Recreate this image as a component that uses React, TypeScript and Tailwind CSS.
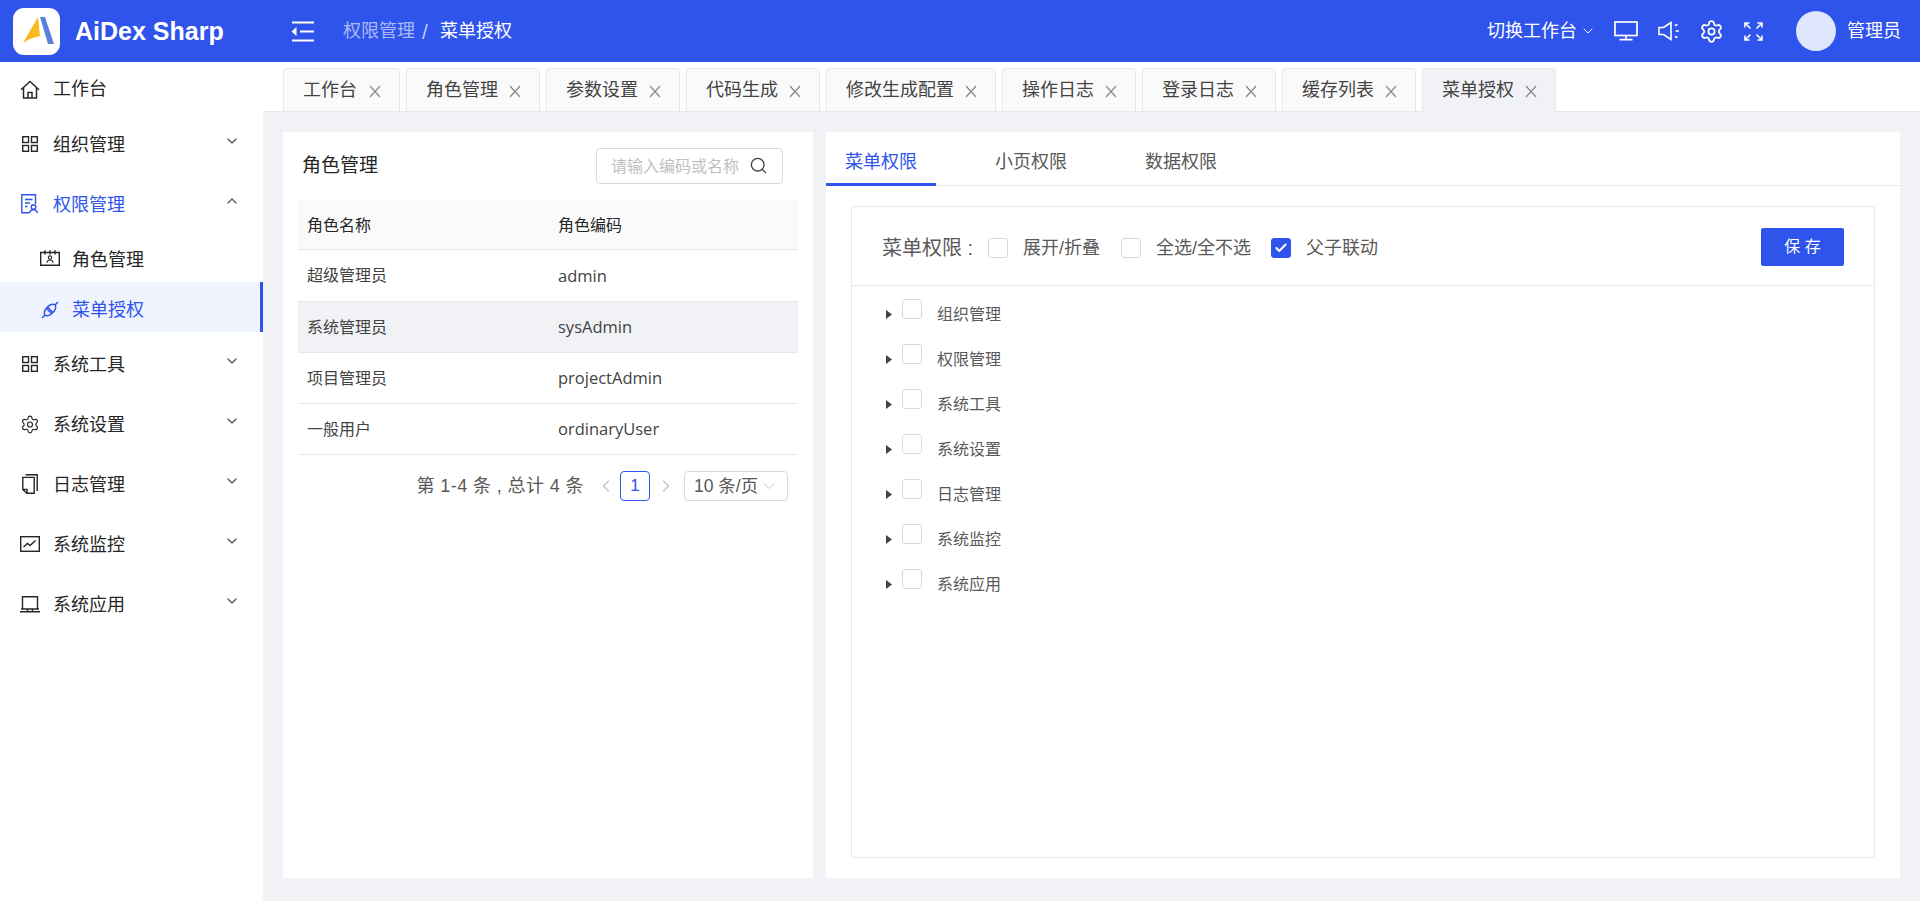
import { Settings, Search, ChevronDown, ChevronUp, ChevronLeft, ChevronRight, Check } from "lucide-react";

const tabs = [
  { label: "工作台", width: "w-[117px]" },
  { label: "角色管理", width: "w-[134px]" },
  { label: "参数设置", width: "w-[134px]" },
  { label: "代码生成", width: "w-[134px]" },
  { label: "修改生成配置", width: "w-[170px]" },
  { label: "操作日志", width: "w-[134px]" },
  { label: "登录日志", width: "w-[134px]" },
  { label: "缓存列表", width: "w-[134px]" },
  { label: "菜单授权", width: "w-[134px]", active: true },
];

const roles = [
  { name: "超级管理员", code: "admin" },
  { name: "系统管理员", code: "sysAdmin", selected: true },
  { name: "项目管理员", code: "projectAdmin" },
  { name: "一般用户", code: "ordinaryUser" },
];

const treeNodes = ["组织管理", "权限管理", "系统工具", "系统设置", "日志管理", "系统监控", "系统应用"];

const Logo = () => (
  <div className="w-[47px] h-[47px] rounded-[11px] bg-white flex items-center justify-center">
    <svg width="47" height="47" viewBox="0 0 47 47">
      <path d="M25 9 L27 28 L17 31 L10 35 Z" fill="#fbb921" />
      <path d="M27 9 L32 9 L41 36 L35 36 Z" fill="#5b7fdc" />
    </svg>
  </div>
);

const CollapseIcon = () => (
  <svg width="24" height="21" viewBox="0 0 24 21" fill="none" stroke="currentColor" strokeWidth="2">
    <path d="M1 1.5h22M9 10.5h14M1 19.5h22" />
    <path d="M0.5 10.5 L5.5 6 V15 Z" fill="currentColor" stroke="none" />
  </svg>
);

const HomeIcon = () => (
  <svg width="20" height="20" viewBox="0 0 20 20" fill="none" stroke="#262626" strokeWidth="1.5">
    <path d="M1 9.8 L10 1.5 L19 9.8" />
    <path d="M3.5 8 V18 H16.5 V8" />
    <path d="M8 18 V12.5 H12 V18" />
  </svg>
);

const GridIcon = () => (
  <svg width="16" height="16" viewBox="0 0 16 16" fill="none" stroke="#262626" strokeWidth="1.4">
    <rect x="0.7" y="0.7" width="5.8" height="5.8" />
    <rect x="9.5" y="0.7" width="5.8" height="5.8" />
    <rect x="0.7" y="9.5" width="5.8" height="5.8" />
    <rect x="9.5" y="9.5" width="5.8" height="5.8" />
  </svg>
);

const AuthIcon = () => (
  <svg width="18" height="20" viewBox="0 0 18 20" fill="none" stroke="#2f54eb" strokeWidth="1.4">
    <path d="M8 18.8 H0.8 V0.8 H14.5 V10" />
    <path d="M4 5.5 H11.5 M4 9 H9 M4 12.5 H6.5" />
    <circle cx="12.5" cy="13" r="2.3" />
    <path d="M8.5 19.2 C9 16.6 10.5 15.8 12.5 15.8 C14.5 15.8 16 16.6 16.5 19.2" />
  </svg>
);

const RoleIcon = () => (
  <svg width="20" height="16" viewBox="0 0 20 16" fill="none" stroke="#262626" strokeWidth="1.4">
    <path d="M0.7 2.5 H19.3 V15.3 H0.7 Z" />
    <path d="M5 0.3 V4.5 M10 0.3 V4.5 M15 0.3 V4.5" />
    <circle cx="10" cy="7.6" r="1.7" strokeWidth="1.1" />
    <path d="M6.8 12.6 C7.3 10.6 8.5 10 10 10 C11.5 10 12.7 10.6 13.2 12.6" strokeWidth="1.1" />
  </svg>
);

const LinkIcon = () => (
  <svg width="18" height="18" viewBox="0 0 18 18" fill="none" stroke="#2f54eb" strokeWidth="1.5">
    <path d="M1 17 L4 14 M14 4 L17 1" />
    <ellipse cx="9" cy="9" rx="7" ry="4" transform="rotate(-45 9 9)" />
    <path d="M6.5 6 L12 11.5 M5.5 7.5 L10.5 12.5" />
  </svg>
);

const LogIcon = () => (
  <svg width="16" height="20" viewBox="0 0 16 20" fill="none" stroke="#262626" strokeWidth="1.4">
    <path d="M3.5 0.8 H15.2 V17" />
    <path d="M5 19.2 H12.2 V3.4 H0.8 V15.4 Z" />
    <path d="M0.8 15.4 H5 V19.2" />
  </svg>
);

const MonitorIcon = () => (
  <svg width="20" height="16" viewBox="0 0 20 16" fill="none" stroke="#262626" strokeWidth="1.4">
    <rect x="0.7" y="0.7" width="18.6" height="14.6" />
    <path d="M3.5 11 L7.5 7.5 L10 9.5 L15.5 4.5" />
  </svg>
);

const LaptopIcon = () => (
  <svg width="20" height="17" viewBox="0 0 20 17" fill="none" stroke="#262626" strokeWidth="1.4">
    <path d="M2.5 13 V0.8 H17.5 V13" />
    <path d="M0 15.8 H20 M1 13 H19 M7.5 13 V15.8 M12.5 13 V15.8" />
  </svg>
);

const GearIcon = () => <Settings size={23} strokeWidth={1.4} color="#262626" />;

const ScreenIcon = () => (
  <svg width="24" height="20" viewBox="0 0 24 20" fill="none" stroke="white" strokeWidth="1.7">
    <rect x="1" y="1" width="22" height="13.5" />
    <path d="M12 14.5 V18.7 M5.5 18.7 H18.5" />
  </svg>
);

const SpeakerIcon = () => (
  <svg width="22" height="20" viewBox="0 0 22 20" fill="none" stroke="white" strokeWidth="1.6">
    <path d="M1 6.5 H5.5 L13 1.5 V18.5 L5.5 13.5 H1 Z" />
    <path d="M16.8 4.5 L19.5 3.5 M17.5 10 H21 M16.8 15.5 L19.5 16.5" />
  </svg>
);

const FullIcon = () => (
  <svg width="19" height="19" viewBox="0 0 19 19" fill="none" stroke="white" strokeWidth="1.6">
    <path d="M1 5.5 V1 H5.5 M1 1 L6.5 6.5" />
    <path d="M13.5 1 H18 V5.5 M18 1 L12.5 6.5" />
    <path d="M1 13.5 V18 H5.5 M1 18 L6.5 12.5" />
    <path d="M18 13.5 V18 H13.5 M18 18 L12.5 12.5" />
  </svg>
);

const CloseX = () => (
  <svg width="12" height="13" viewBox="0 0 12 13" fill="none" stroke="#8c8c8c" strokeWidth="1.3" className="shrink-0 mt-[2px]">
    <path d="M1 1 L11 12 M11 1 L1 12" />
  </svg>
);

const SideItem = ({ icon, label, active, open }: { icon: React.ReactNode; label: string; active?: boolean; open?: boolean }) => (
  <div className={`h-[60px] flex items-center pl-[20px] pr-[23px] text-[18px] ${active ? "text-[#2f54eb]" : "text-[#262626]"}`}>
    <span className="w-[20px] flex justify-center shrink-0">{icon}</span>
    <span className="ml-[13px] pt-[2px] flex-1">{label}</span>
    {open ? (
      <ChevronUp size={16} strokeWidth={2} color="#595959" className="-mt-[6px]" />
    ) : (
      <ChevronDown size={16} strokeWidth={2} color="#595959" className="-mt-[6px]" />
    )}
  </div>
);

const Box = ({ checked }: { checked?: boolean }) => (
  <span
    className={`w-[20px] h-[20px] rounded-[3px] border flex items-center justify-center shrink-0 ${
      checked ? "bg-[#2f54eb] border-[#2f54eb]" : "bg-white border-[#d9d9d9]"
    }`}
  >
    {checked && <Check size={14} strokeWidth={3.5} color="white" />}
  </span>
);

const Sidebar = () => (
  <aside className="w-[263px] shrink-0 bg-white">
    <div className="h-[52px] pt-[3px] flex items-center pl-[20px] text-[18px] text-[#262626]">
      <span className="w-[20px] flex justify-center shrink-0"><HomeIcon /></span>
      <span className="ml-[13px]">工作台</span>
    </div>
    <SideItem icon={<GridIcon />} label="组织管理" />
    <SideItem icon={<AuthIcon />} label="权限管理" active open />
    <div className="h-[48px] flex items-center pl-[40px] text-[18px] text-[#262626]">
      <RoleIcon />
      <span className="ml-[12px] pt-[5px]">角色管理</span>
    </div>
    <div className="h-[50px] pt-[6px] flex items-center pl-[41px] text-[18px] text-[#2f54eb] bg-[#f0f4ff] border-r-[3px] border-[#2f54eb]">
      <LinkIcon />
      <span className="ml-[13px] pt-[1px]">菜单授权</span>
    </div>
    <div className="mt-[2px]">
      <SideItem icon={<GridIcon />} label="系统工具" />
      <SideItem icon={<GearIcon />} label="系统设置" />
      <SideItem icon={<LogIcon />} label="日志管理" />
      <SideItem icon={<MonitorIcon />} label="系统监控" />
      <SideItem icon={<LaptopIcon />} label="系统应用" />
    </div>
  </aside>
);

const App = () => {
  return (
    <div className="h-[901px] w-[1920px] overflow-hidden flex flex-col bg-[#f0f2f5] font-['Liberation_Sans','Noto_Sans_CJK_SC',sans-serif]">
      {/* Header */}
      <header className="h-[62px] shrink-0 bg-[#2f54eb] flex items-center text-white">
        <div className="w-[291px] flex items-center pl-[13px]">
          <Logo />
          <span className="ml-[15px] text-[25px] font-bold leading-none">AiDex Sharp</span>
        </div>
        <CollapseIcon />
        <div className="ml-[28px] text-[18px] flex items-center">
          <span className="text-white/60">权限管理</span>
          <span className="ml-[7px] mr-[11px] w-[7px] text-[21px] leading-none text-white/70">/</span>
          <span>菜单授权</span>
        </div>
        <div className="ml-auto flex items-center pr-[19px]">
          <span className="text-[18px]">切换工作台</span>
          <ChevronDown size={16} strokeWidth={1.4} className="ml-[3px]" />
          <span className="ml-[18px]"><ScreenIcon /></span>
          <span className="ml-[20px]"><SpeakerIcon /></span>
          <Settings size={25} strokeWidth={1.7} className="ml-[19px]" />
          <span className="ml-[20px]"><FullIcon /></span>
          <div className="ml-[33px] w-[40px] h-[40px] rounded-full bg-[#dfe5fb]" />
          <span className="ml-[11px] text-[18px]">管理员</span>
        </div>
      </header>

      <div className="flex flex-1 min-h-0">
        <Sidebar />

        <main className="flex-1 min-w-0 flex flex-col">
          {/* Tabs */}
          <div className="h-[50px] shrink-0 bg-white border-b border-[#e5e7eb] pl-[20px] pt-[6px] flex gap-[6px]">
            {tabs.map((tab) => (
              <div
                key={tab.label}
                className={`${tab.width} h-[44px] rounded-t-[4px] border border-[#e8e8e8] flex items-center justify-between pl-[19px] pr-[18px] text-[18px] text-[#434343] ${
                  tab.active ? "bg-[#f0f2f5] border-b-[#f0f2f5]" : "bg-[#fafafa]"
                }`}
              >
                <span>{tab.label}</span>
                <CloseX />
              </div>
            ))}
          </div>

          <div className="flex-1 min-h-0 flex gap-[13px] pt-[20px] pl-[20px] pr-[20px] pb-[23px]">
            {/* Role list */}
            <section className="w-[530px] shrink-0 bg-white px-[15px]">
              <div className="h-[67px] flex items-center justify-between pr-[15px]">
                <h2 className="pl-[4px] pt-[2px] text-[19px] font-normal text-[#262626]">角色管理</h2>
                <div className="w-[187px] h-[36px] border border-[#d9d9d9] rounded-[4px] flex items-center justify-between pl-[14px] pr-[14px] text-[16px] text-[#bfbfbf]">
                  <span className="whitespace-nowrap pt-[2px]">请输入编码或名称</span>
                  <Search size={19} strokeWidth={1.7} color="#434343" />
                </div>
              </div>

              <div className="h-[51px] pt-[3px] bg-[#fafafa] rounded-t-[4px] border-b border-[#e8e8e8] grid grid-cols-2 items-center text-[16px] text-[#262626]">
                <span className="pl-[9px]">角色名称</span>
                <span className="pl-[10px]">角色编码</span>
              </div>
              <div>
                {roles.map((role) => (
                  <div
                    key={role.code}
                    className={`h-[51px] first:h-[52px] pt-[1px] border-b border-[#e8e8e8] grid grid-cols-2 items-center text-[16px] text-[#434343] ${
                      role.selected ? "bg-[#f0f2f5]" : ""
                    }`}
                  >
                    <span className="pl-[9px]">{role.name}</span>
                    <span className="pl-[10px] font-['Open_Sans','Noto_Sans_CJK_SC',sans-serif] text-[16.5px]">{role.code}</span>
                  </div>
                ))}
              </div>

              <div className="mt-[16px] h-[30px] flex items-center justify-end pr-[10px] text-[18px] text-[#595959]">
                <span className="tracking-[0.4px]">第 1-4 条 , 总计 4 条</span>
                <ChevronLeft size={20} strokeWidth={1.4} color="#bfbfbf" className="ml-[12px]" />
                <span className="ml-[4px] w-[30px] h-[30px] border border-[#2f54eb] rounded-[4px] text-[#2f54eb] flex items-center justify-center text-[17px]">1</span>
                <ChevronRight size={20} strokeWidth={1.4} color="#bfbfbf" className="ml-[6px]" />
                <div className="ml-[8px] w-[104px] h-[30px] border border-[#d9d9d9] rounded-[4px] flex items-center justify-between pl-[9px] pr-[8px]">
                  <span className="whitespace-nowrap text-[17.5px]">10 条/页</span>
                  <ChevronDown size={20} strokeWidth={1.1} color="#bfbfbf" />
                </div>
              </div>
            </section>

            {/* Permission panel */}
            <section className="flex-1 min-w-0 bg-white flex flex-col">
              <div className="h-[54px] shrink-0 border-b border-[#e8e8e8] flex gap-[40px] text-[18px] text-[#595959]">
                <span className="w-[110px] h-[54px] pt-[9px] flex items-center justify-center text-[#2f54eb] border-b-[3px] border-[#2f54eb]">菜单权限</span>
                <span className="w-[110px] h-[54px] pt-[6px] flex items-center justify-center">小页权限</span>
                <span className="w-[110px] h-[54px] pt-[6px] flex items-center justify-center">数据权限</span>
              </div>

              <div className="mx-[25px] mt-[20px] mb-[20px] flex-1 min-h-0 border border-[#e8e8e8] rounded-[2px]">
                <div className="h-[79px] pt-[4px] border-b border-[#e8e8e8] flex items-center pl-[30px] pr-[30px]">
                  <span className="text-[20px] text-[#595959] w-[106px] whitespace-nowrap">菜单权限 :</span>
                  <Box />
                  <span className="ml-[15px] w-[98px] text-[18px] text-[#595959]">展开/折叠</span>
                  <Box />
                  <span className="ml-[15px] w-[115px] text-[18px] text-[#595959]">全选/全不选</span>
                  <Box checked />
                  <span className="ml-[15px] text-[18px] text-[#595959]">父子联动</span>
                  <button className="ml-auto -mt-[3px] w-[83px] h-[38px] rounded-[2px] bg-[#2f54eb] text-white text-[16px]">保 存</button>
                </div>
                <div className="pt-[6px]">
                  {treeNodes.map((node) => (
                    <div key={node} className="h-[45px] flex items-center pl-[34px] text-[16px] text-[#595959]">
                      <svg width="6" height="9" viewBox="0 0 6 9" className="shrink-0">
                        <path d="M0 0 L6 4.5 L0 9 Z" fill="#434343" />
                      </svg>
                      <span className="ml-[10px] -mt-[12px]"><Box /></span>
                      <span className="ml-[15px]">{node}</span>
                    </div>
                  ))}
                </div>
              </div>
            </section>
          </div>
        </main>
      </div>
    </div>
  );
};

export default App;
